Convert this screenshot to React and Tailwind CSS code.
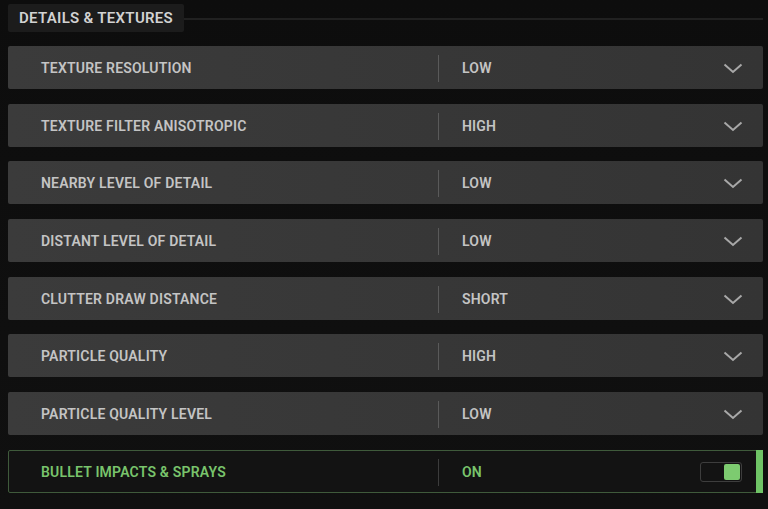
import { useState } from 'react'

const settings = [
    { label: 'Texture Resolution', value: 'Low' },
    { label: 'Texture Filter Anisotropic', value: 'High' },
    { label: 'Nearby Level of Detail', value: 'Low' },
    { label: 'Distant Level of Detail', value: 'Low' },
    { label: 'Clutter Draw Distance', value: 'Short' },
    { label: 'Particle Quality', value: 'High' },
    { label: 'Particle Quality Level', value: 'Low' },
];

function Chevron() {
    return (
        <svg width="20" height="11" viewBox="0 0 20 11" className="text-[#a8a8a8]">
            <path d="M1.5 1.5 L10 9 L18.5 1.5" fill="none" stroke="currentColor" strokeWidth="2" />
        </svg>
    );
}

function SelectRow({ label, value }) {
    return (
        <div className="flex h-[43px] items-center rounded-[2px] bg-gradient-to-r from-[#3b3b3b] to-[#343434] pt-[2px] text-[#c4c4c4]">
            <div className="w-[430px] pl-[33px]">{label}</div>
            <div className="h-[27px] w-px bg-[#5a5a5a]" />
            <div className="flex-1 pl-[23px]">{value}</div>
            <div className="pr-[20px]">
                <Chevron />
            </div>
        </div>
    );
}

function ToggleRow({ label }) {
    const [on, setOn] = useState(true);
    return (
        <div className="relative flex h-[43px] items-center rounded-[2px] border border-[#3f5a3b] bg-[#131313] pt-[2px] text-[#79c46c]">
            <div className="w-[429px] pl-[32px]">{label}</div>
            <div className="h-[27px] w-px bg-[#3c3c3c]" />
            <div className="flex-1 pl-[23px]">{on ? 'On' : 'Off'}</div>
            <button
                onClick={() => setOn(!on)}
                className="mr-[20px] flex h-[20px] w-[42px] items-center justify-end rounded-[3px] border-[1.5px] border-[#3d3d3d] pr-[1px]"
            >
                <span className="h-[16px] w-[16px] rounded-[2px] bg-[#7dcb70]" />
            </button>
            <div className="absolute -right-px -top-px h-[43px] w-[7px] bg-[#6fc466]" />
        </div>
    );
}

export default function App() {
    return (
        <div
            className="h-[509px] w-[768px] overflow-hidden bg-gradient-to-b from-[#0d0d0d] to-[#101010] pl-[8px] pr-[5px] pt-[4px] font-semibold uppercase text-[14px] tracking-[0.2px]"
            style={{ fontFamily: 'Roboto, "Liberation Sans", sans-serif' }}
        >
            <div className="flex items-center">
                <div className="flex h-[28px] items-center rounded-[2px] bg-[#1c1c1c] pl-[11px] pr-[11px] pt-[1px] text-[15px] tracking-[0.3px] text-[#d2d2d2]">
                    Details &amp; Textures
                </div>
                <div className="mt-[1px] h-[2px] flex-1 bg-[#212121]" />
            </div>
            <div className="mt-[14px] flex flex-col gap-[14.7px]">
                {settings.map((s) => (
                    <SelectRow key={s.label} label={s.label} value={s.value} />
                ))}
                <ToggleRow label="Bullet Impacts & Sprays" />
            </div>
        </div>
    );
}
